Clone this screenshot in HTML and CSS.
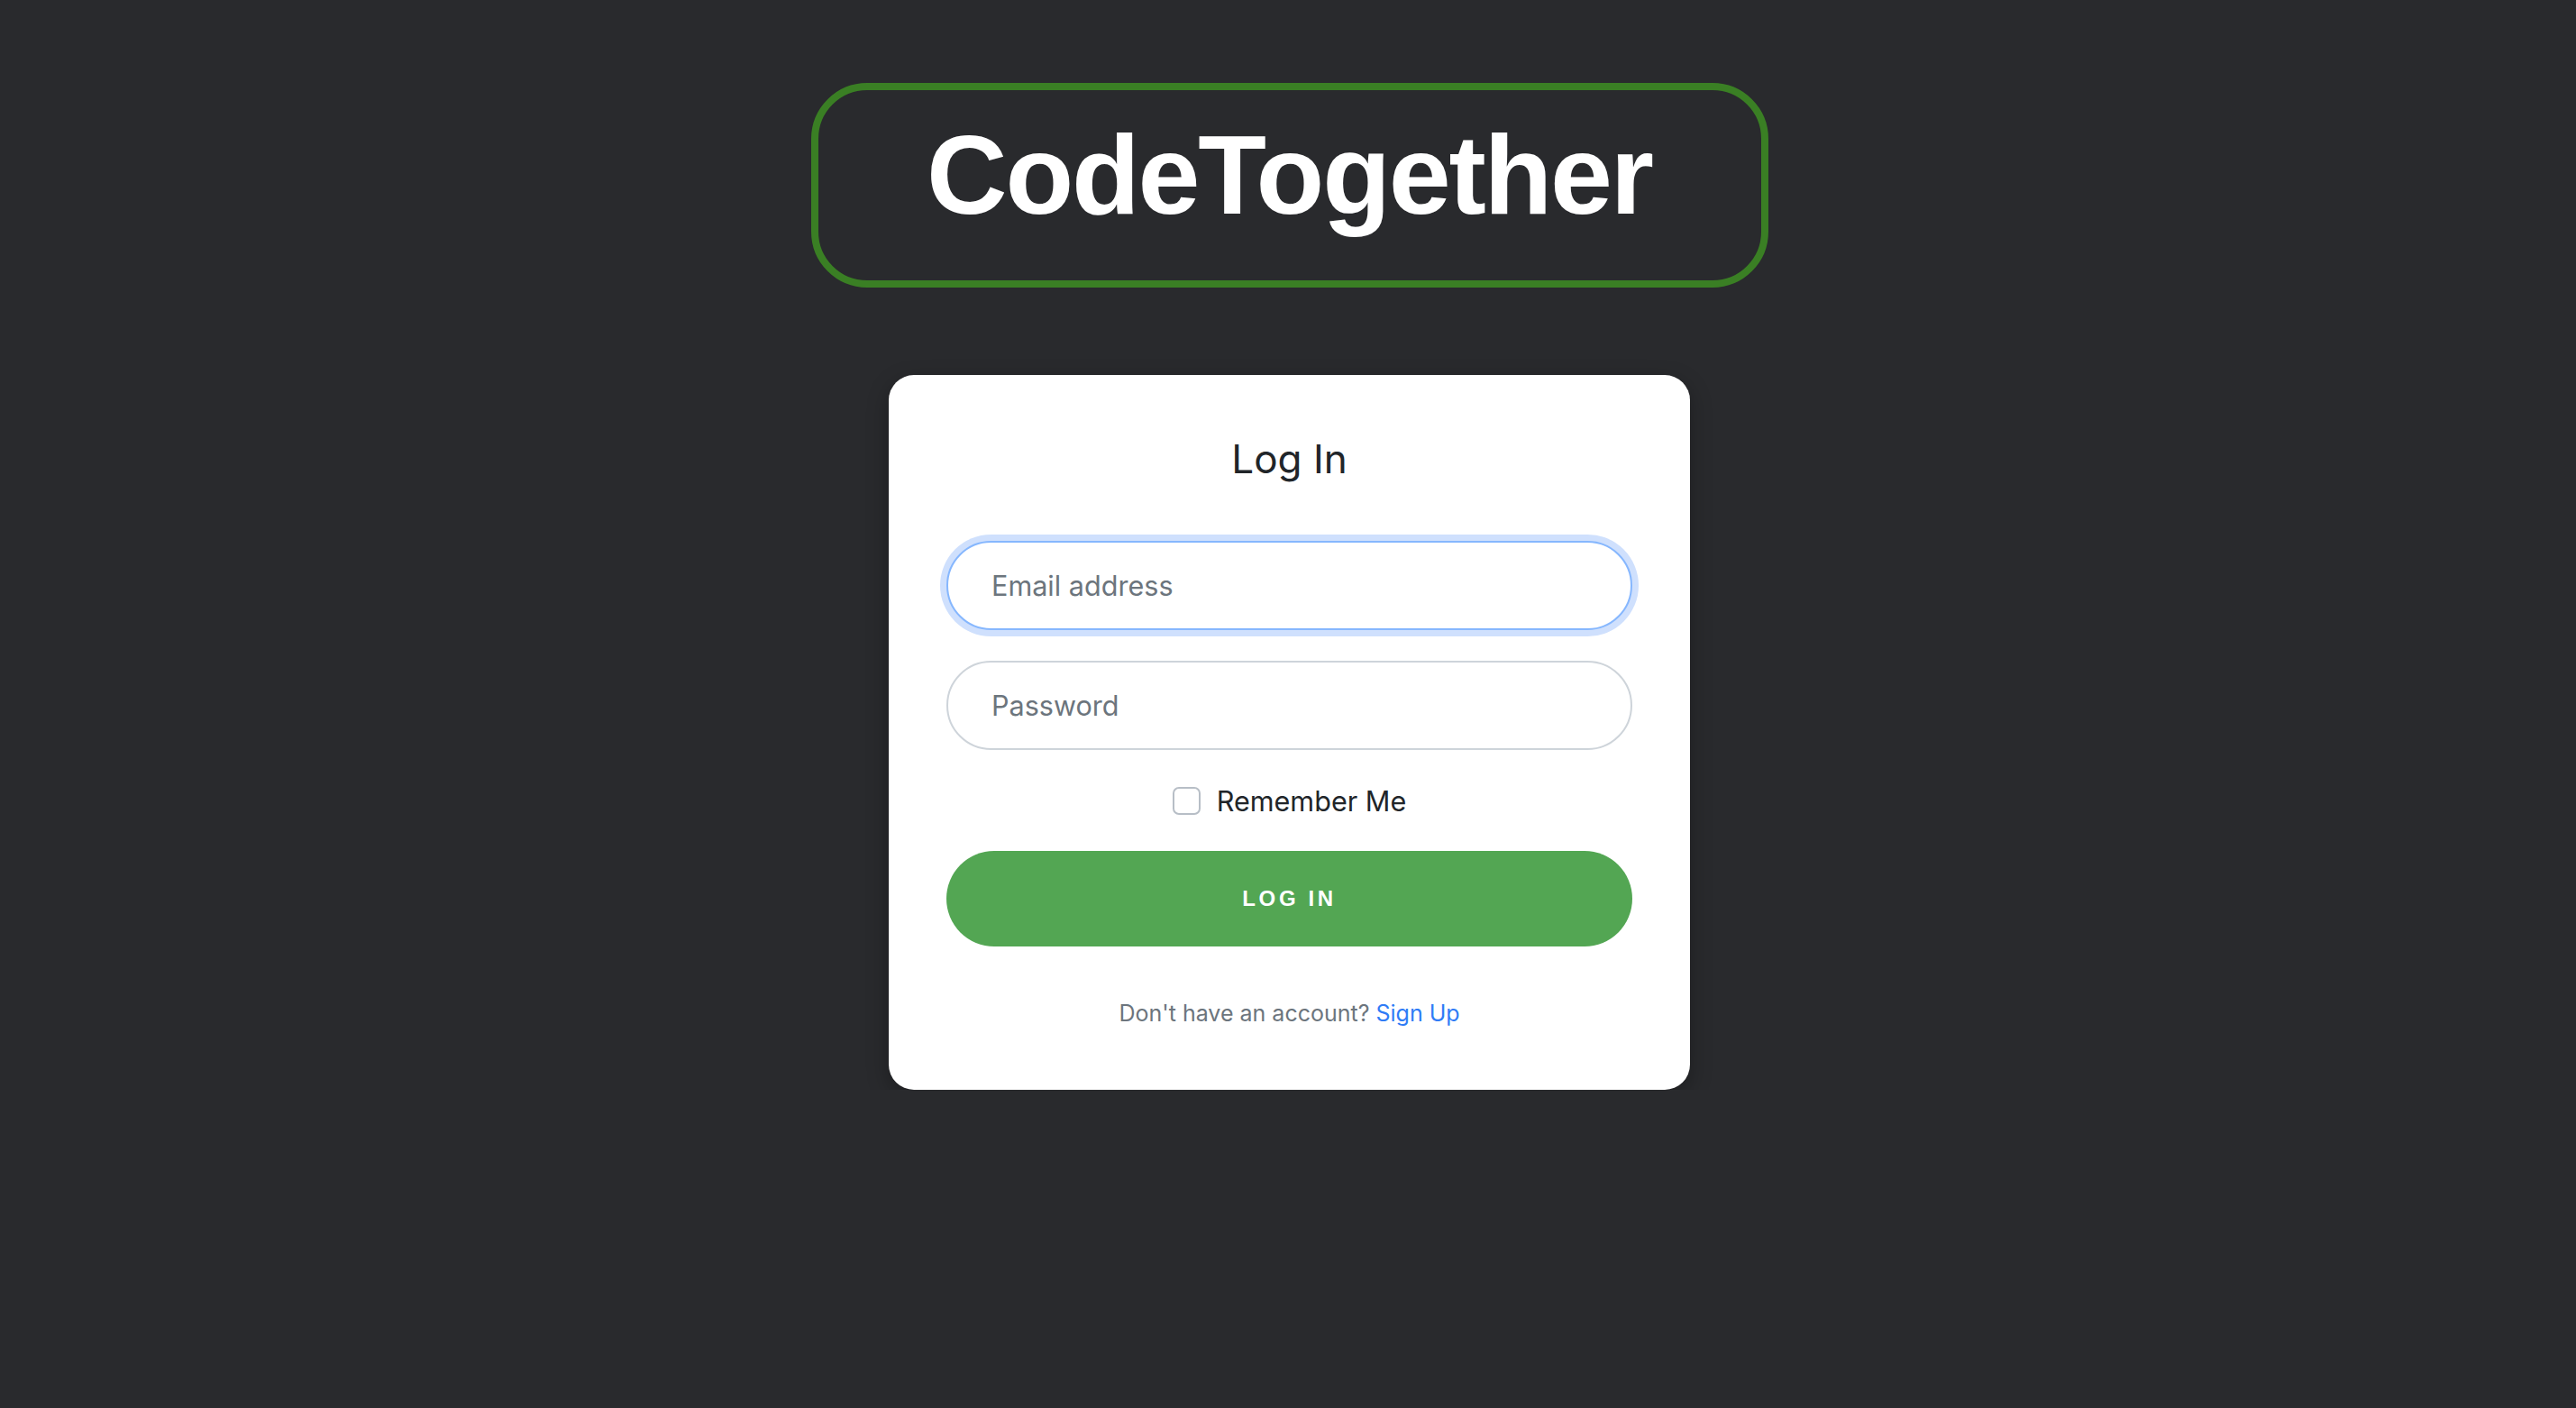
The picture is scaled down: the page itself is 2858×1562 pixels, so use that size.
FILE: index.html
```html
<!DOCTYPE html>
<html lang="en">
<head>
  <meta charset="UTF-8">
  <meta name="viewport" content="width=device-width, initial-scale=1.0">
  <title>CodeTogether - Log In</title>
  <link rel="stylesheet" href="styles.css">
</head>
<body>
  <header class="brand">
    <h1>CodeTogether</h1>
  </header>

  <main class="login-card">
    <h2>Log In</h2>
    <form class="login-form" onsubmit="return false">
      <input type="email" class="field field-focus" placeholder="Email address" autofocus>
      <input type="password" class="field" placeholder="Password">
      <label class="remember">
        <input type="checkbox">
        <span>Remember Me</span>
      </label>
      <button type="submit" class="login-btn">LOG IN</button>
    </form>
    <p class="signup">Don't have an account? <a href="#">Sign Up</a></p>
  </main>
</body>
</html>
```

FILE: styles.css
```css
body {
  margin: 0;
  padding: 92px 0 0 3px;
  background: #292a2d;
  font-family: Inter, 'Liberation Sans', sans-serif;
  color: #212529;
  display: flex;
  flex-direction: column;
  align-items: center;
}
.brand {
  box-sizing: border-box;
  width: 1062px;
  height: 227px;
  border: 8px solid #3a7f24;
  border-radius: 62px;
  padding: 32px 0 0;
  text-align: center;
}
.brand h1 {
  margin: 0;
  font-family: 'Liberation Sans', Arial, sans-serif;
  font-weight: bold;
  font-size: 124px;
  line-height: 124px;
  letter-spacing: -2.2px;
  color: #fff;
}
.login-card {
  box-sizing: border-box;
  width: 889px;
  margin-top: 97px;
  padding: 65px 64px 67px;
  background: #fff;
  border-radius: 28px;
  box-shadow: 0 8px 24px rgba(0,0,0,0.3);
}
.login-card h2 {
  margin: 0;
  font-size: 44px;
  line-height: 56px;
  font-weight: 400;
  text-align: center;
}
.login-form {
  display: flex;
  flex-direction: column;
  margin-top: 63px;
}
.field {
  box-sizing: border-box;
  height: 99px;
  padding: 0 48px;
  border: 2px solid #ced4da;
  border-radius: 50px;
  font-family: inherit;
  font-size: 30.6px;
  color: #212529;
  outline: none;
}
.field::placeholder {
  color: #6c757d;
}
.field + .field {
  margin-top: 34px;
}
.field-focus, .field:focus {
  border-color: #86b7fe;
  box-shadow: 0 0 0 7px #cfe0fd;
}
.remember {
  height: 48px;
  margin-top: 32px;
  display: flex;
  align-items: center;
  justify-content: center;
  gap: 18px;
  font-size: 30.6px;
}
.remember input {
  appearance: none;
  margin: 0;
  width: 31px;
  height: 31px;
  border: 2px solid #b7bec6;
  border-radius: 7px;
  background: #fff;
}
.login-btn {
  height: 106px;
  margin-top: 32px;
  border: none;
  border-radius: 53px;
  background: #53a653;
  color: #fff;
  font-family: 'Liberation Sans', Arial, sans-serif;
  font-weight: bold;
  font-size: 24px;
  letter-spacing: 3.6px;
  cursor: pointer;
}
.signup {
  margin: 56px 0 0;
  font-size: 25px;
  line-height: 36px;
  text-align: center;
  color: #6c757d;
}
.signup a {
  color: #2f7cf6;
  text-decoration: none;
}
```
